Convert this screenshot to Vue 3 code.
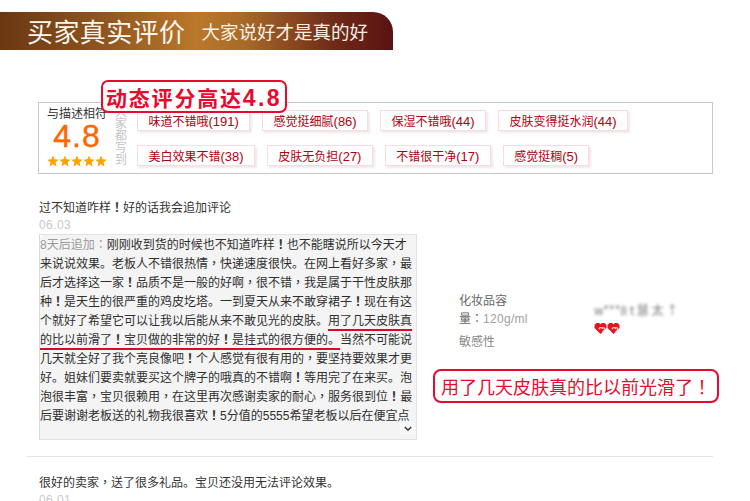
<script setup>
const row1 = [
  { t: '味道不错哦', n: 191 },
  { t: '感觉挺细腻', n: 86 },
  { t: '保湿不错哦', n: 44 },
  { t: '皮肤变得挺水润', n: 44 },
]
const row2 = [
  { t: '美白效果不错', n: 38 },
  { t: '皮肤无负担', n: 27 },
  { t: '不错很干净', n: 17 },
  { t: '感觉挺稠', n: 5 },
]
const stars = [0, 1, 2, 3, 4]

// Split a text so full-width punctuation can sit centred in its cell.
const segs = (text) => text.split(/([，！：])/).filter(Boolean)
const isBang = (s) => s === '！'
const isPunct = (s) => s === '，' || s === '！' || s === '：'

const comment1 = segs('过不知道咋样！好的话我会追加评论')
const comment2 = segs('很好的卖家，送了很多礼品。宝贝还没用无法评论效果。')
const lead = segs('8天后追加：')
const before = segs('刚刚收到货的时候也不知道咋样！也不能瞎说所以今天才来说说效果。老板人不错很热情，快递速度很快。在网上看好多家，最后才选择这一家！品质不是一般的好啊，很不错，我是属于干性皮肤那种！是天生的很严重的鸡皮圪塔。一到夏天从来不敢穿裙子！现在有这个就好了希望它可以让我以后能从来不敢见光的皮肤。')
const marked = segs('用了几天皮肤真的比以前滑了！宝贝做的非常的好！是挂式的很方便的。')
const after = segs('当然不可能说几天就全好了我个亮良像吧！个人感觉有很有用的，要坚持要效果才更好。姐妹们要卖就要买这个牌子的哦真的不错啊！等用完了在来买。泡泡很丰富，宝贝很赖用，在这里再次感谢卖家的耐心，服务很到位！最后要谢谢老板送的礼物我很喜欢！5分值的5555希望老板以后在便宜点')
</script>

<template>
  <div class="page">
    <header class="banner">
      <span class="banner-main">买家真实评价</span>
      <span class="banner-sub">大家说好才是真的好</span>
    </header>

    <section class="summary">
      <div class="callout-top">动态评分高达<span class="callout-num">4.8</span></div>
      <div class="score">
        <div class="score-label">与描述相符</div>
        <div class="score-num">4.8</div>
        <div class="stars">
          <svg v-for="s in stars" :key="s" viewBox="0 0 24 24" width="12" height="12">
            <polygon points="12,1 15.2,8.6 23.4,9.3 17.2,14.7 19.1,22.8 12,18.5 4.9,22.8 6.8,14.7 .6,9.3 8.8,8.6" fill="#f9a400" />
          </svg>
        </div>
      </div>
      <div class="vert">大家都写到：</div>
      <div class="tags">
        <div class="tag-row">
          <span v-for="r in row1" :key="r.t" class="tag">{{ r.t }}<span class="tag-n">({{ r.n }})</span></span>
        </div>
        <div class="tag-row">
          <span v-for="r in row2" :key="r.t" class="tag">{{ r.t }}<span class="tag-n">({{ r.n }})</span></span>
        </div>
      </div>
    </section>

    <section class="review">
      <p class="comment"><span v-for="(s, i) in comment1" :key="i" :class="{ punct: isPunct(s), bang: isBang(s) }">{{ s }}</span></p>
      <p class="date">06.03</p>
      <div class="review-row">
        <div class="addon">
          <div class="addon-text"><span class="muted"><span v-for="(s, i) in lead" :key="i" :class="{ punct: isPunct(s) }">{{ s }}</span></span><span v-for="(s, i) in before" :key="'b' + i" :class="{ punct: isPunct(s), bang: isBang(s) }">{{ s }}</span><span class="mark"><span v-for="(s, i) in marked" :key="'m' + i" :class="{ punct: isPunct(s), bang: isBang(s) }">{{ s }}</span></span><span v-for="(s, i) in after" :key="'a' + i" :class="{ punct: isPunct(s), bang: isBang(s) }">{{ s }}</span></div>
          <span class="scroll-btn">
            <svg viewBox="0 0 10 6" width="8" height="5">
              <path d="M1 1l4 4 4-4" fill="none" stroke="#333" stroke-width="1.8" />
            </svg>
          </span>
        </div>
        <div class="side">
          <div class="spec">
            <div class="spec-a">化妆品容<br />量<span class="punct">：</span><span class="spec-v">120g/ml</span></div>
            <div class="spec-b">敏感性</div>
          </div>
          <div class="buyer">
            <div class="blur">w***8 t 慧 太 ↑</div>
            <div class="hearts">
              <svg v-for="h in 2" :key="h" viewBox="0 0 13 11" width="13" height="11">
                <path d="M6.5 11L.5 5V2L2.5 0h2.5l1.5 1.2L8 0h2.5l2 2v3z" fill="#e3151f" />
                <path d="M5 6.2c.6-1.8 2.6-2 3.4-.8.8-1.1 2.6-.5 2.6 1l-2.4 2.4" fill="none" stroke="#fbd0d0" stroke-width="1.2" />
              </svg>
            </div>
          </div>
        </div>
        <div class="callout-side">用了几天皮肤真的比以前光滑了<span class="punct">！</span></div>
      </div>
    </section>

    <hr class="divider" />

    <section class="review next">
      <p class="comment"><span v-for="(s, i) in comment2" :key="i" :class="{ punct: isPunct(s), bang: isBang(s) }">{{ s }}</span></p>
      <p class="date">06.01</p>
    </section>
  </div>
</template>

<style scoped>
.page {
  position: relative;
  width: 750px;
  height: 501px;
  overflow: hidden;
  padding-top: 12px;
  box-sizing: border-box;
  background: #fff;
  font-family: "Noto Sans CJK SC", "Liberation Sans", sans-serif;
  font-size: 12px;
  color: #333;
}
.punct {
  font-family: "Noto Sans CJK TC", sans-serif;
  line-height: 1;
}
.bang {
  font-weight: 700;
}
.banner {
  width: 393px;
  height: 38px;
  box-sizing: border-box;
  padding: 0 0 0 27px;
  display: flex;
  align-items: center;
  gap: 16px;
  color: #fff;
  border-top-right-radius: 20px;
  background: linear-gradient(90deg, #6a3712 0%, #8f5520 26%, #bb782b 50%, #a86a28 62%, #6f2a18 85%, #5a1212 100%);
}
.banner-main {
  font-size: 26px;
  line-height: 38px;
  letter-spacing: .4px;
  color: #fbf7ef;
}
.banner-sub {
  font-size: 18.5px;
  line-height: 38px;
  color: #f6efe3;
}
.summary {
  position: relative;
  margin: 52px 0 0 38px;
  width: 675px;
  height: 72px;
  box-sizing: border-box;
  border: 1px solid #c8c8c8;
  display: flex;
}
.callout-top {
  position: absolute;
  left: 62px;
  top: -23px;
  width: 186px;
  height: 33px;
  box-sizing: border-box;
  border: 2px solid #e60b2e;
  border-radius: 7px;
  background: #fff;
  color: #e60b2e;
  font-size: 21px;
  font-weight: 700;
  letter-spacing: 1.8px;
  line-height: 30px;
  text-align: center;
  white-space: nowrap;
}
.callout-num {
  font-family: "Liberation Sans", sans-serif;
  font-size: 23px;
  letter-spacing: 2.4px;
}
.score {
  width: 76px;
  flex: none;
  text-align: center;
}
.score-label {
  font-size: 12px;
  line-height: 16px;
  margin-top: 2px;
  white-space: nowrap;
}
.score-num {
  font-family: "Liberation Sans", sans-serif;
  font-size: 32px;
  line-height: 31px;
  letter-spacing: 1px;
  color: #ff6600;
  -webkit-text-stroke: 0.4px #ff6600;
}
.stars {
  display: flex;
  justify-content: center;
  margin-top: 3px;
}
.vert {
  flex: none;
  width: 12px;
  height: 68px;
  overflow: hidden;
  font-size: 12px;
  line-height: 12px;
  color: #c4c4c4;
  word-break: break-all;
  margin-top: 2px;
}
.tags {
  margin-left: 10px;
  padding-top: 7px;
  display: flex;
  flex-direction: column;
  gap: 14px;
}
.tag-row {
  display: flex;
  gap: 12px;
}
.tag {
  height: 21px;
  box-sizing: border-box;
  padding: 0 10.4px;
  border: 1px solid #fbdbe2;
  box-shadow: 2px 2px 2px #f1e8ea;
  color: #b0000e;
  font-size: 12px;
  line-height: 20px;
  white-space: nowrap;
}
.tag-n {
  font-family: "Liberation Sans", sans-serif;
  font-size: 13px;
}
.review {
  padding-left: 39px;
  margin-top: 24px;
}
.comment {
  margin: 0;
  font-size: 12px;
  line-height: 18px;
}
.date {
  margin: 1px 0 0;
  font-family: "Liberation Sans", sans-serif;
  font-size: 12px;
  line-height: 17px;
  letter-spacing: .4px;
  color: #c9c9c9;
}
.review-row {
  position: relative;
  display: flex;
}
.addon {
  position: relative;
  width: 378px;
  height: 206px;
  flex: none;
  box-sizing: border-box;
  border: 1px solid #e2e2e2;
  border-left-color: #d8d8d8;
  background: #f4f4f4;
  overflow: hidden;
}
.addon::before {
  content: "";
  position: absolute;
  left: -1px;
  top: -1px;
  width: 5px;
  height: 5px;
  background: #fff;
  clip-path: polygon(0 0, 100% 0, 0 100%);
}
.addon-text {
  font-family: "Liberation Sans", "Noto Sans CJK SC", sans-serif;
  font-size: 12px;
  line-height: 19px;
  padding-top: 1px;
  width: 376px;
  color: #2f2f2f;
}
.muted {
  color: #9b9b9b;
}
.mark {
  border-bottom: 2px solid #e3002b;
  padding-bottom: 1px;
}
.scroll-btn {
  position: absolute;
  right: 1px;
  bottom: 5px;
  width: 15px;
  height: 11px;
  display: flex;
  align-items: center;
  justify-content: center;
  background: #f9f9f9;
}
.side {
  display: flex;
  margin-left: 42px;
  padding-top: 57px;
}
.spec {
  width: 74px;
  flex: none;
  line-height: 18px;
  color: #666;
}
.spec-v {
  color: #a0a0a0;
  font-family: "Liberation Sans", sans-serif;
  letter-spacing: .3px;
}
.spec-b {
  color: #8a8a8a;
  margin-top: 4px;
}
.buyer {
  margin-left: 61px;
  padding-top: 10px;
}
.blur {
  color: #777;
  filter: blur(1.6px);
  white-space: nowrap;
  line-height: 18px;
}
.hearts {
  display: flex;
  margin-top: 4px;
}
.callout-side {
  position: absolute;
  left: 394px;
  top: 135px;
  width: 286px;
  height: 34px;
  box-sizing: border-box;
  border: 2px solid #e60b2e;
  border-radius: 8px;
  background: #fff;
  color: #e60b2e;
  font-size: 18px;
  line-height: 30px;
  text-align: center;
  white-space: nowrap;
}
.divider {
  margin: 16px 0 0 27px;
  width: 686px;
  height: 1px;
  border: 0;
  background: #e6e6e6;
}
.next {
  margin-top: 16px;
}
</style>

<style>
html, body {
  margin: 0;
  overflow: hidden;
}
</style>
